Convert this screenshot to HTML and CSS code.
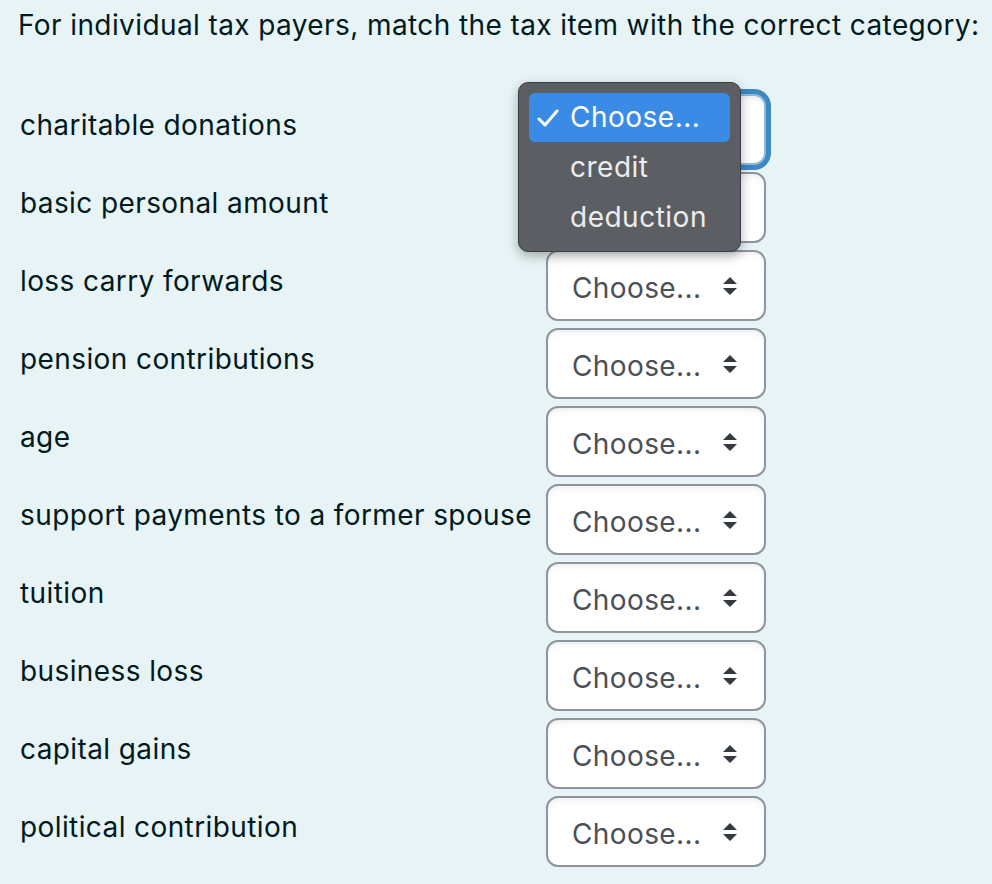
FILE: index.html
```html
<!DOCTYPE html>
<html lang="en">
<head>
  <meta charset="UTF-8">
  <meta name="viewport" content="width=device-width, initial-scale=1.0">
  <title>Match question</title>
  <link rel="stylesheet" href="styles.css">
</head>
<body>
  <div class="formulation">
    <div class="qtext">For individual tax payers, match the tax item with the correct category:</div>
    <div class="answer">
      <div class="text">charitable donations</div>
      <div class="control">
        <div class="select focused"></div>
        <div class="menu">
          <div class="option active"><svg class="check" viewBox="0 0 22 20"><path d="M2 11L8 17L20 3"/></svg>Choose...</div>
          <div class="option">credit</div>
          <div class="option">deduction</div>
        </div>
      </div>

      <div class="text">basic personal amount</div>
      <div class="control"><div class="select"></div></div>

      <div class="text">loss carry forwards</div>
      <div class="control"><div class="select"><span>Choose...</span><svg class="arrows" viewBox="0 0 14 18"><path d="M7 0L14 7H0Z M0 11H14L7 18Z"/></svg></div></div>

      <div class="text">pension contributions</div>
      <div class="control"><div class="select"><span>Choose...</span><svg class="arrows" viewBox="0 0 14 18"><path d="M7 0L14 7H0Z M0 11H14L7 18Z"/></svg></div></div>

      <div class="text">age</div>
      <div class="control"><div class="select"><span>Choose...</span><svg class="arrows" viewBox="0 0 14 18"><path d="M7 0L14 7H0Z M0 11H14L7 18Z"/></svg></div></div>

      <div class="text">support payments to a former spouse</div>
      <div class="control"><div class="select"><span>Choose...</span><svg class="arrows" viewBox="0 0 14 18"><path d="M7 0L14 7H0Z M0 11H14L7 18Z"/></svg></div></div>

      <div class="text">tuition</div>
      <div class="control"><div class="select"><span>Choose...</span><svg class="arrows" viewBox="0 0 14 18"><path d="M7 0L14 7H0Z M0 11H14L7 18Z"/></svg></div></div>

      <div class="text">business loss</div>
      <div class="control"><div class="select"><span>Choose...</span><svg class="arrows" viewBox="0 0 14 18"><path d="M7 0L14 7H0Z M0 11H14L7 18Z"/></svg></div></div>

      <div class="text">capital gains</div>
      <div class="control"><div class="select"><span>Choose...</span><svg class="arrows" viewBox="0 0 14 18"><path d="M7 0L14 7H0Z M0 11H14L7 18Z"/></svg></div></div>

      <div class="text">political contribution</div>
      <div class="control"><div class="select"><span>Choose...</span><svg class="arrows" viewBox="0 0 14 18"><path d="M7 0L14 7H0Z M0 11H14L7 18Z"/></svg></div></div>
    </div>
  </div>
</body>
</html>
```
FILE: styles.css
```css
body {
  margin: 0;
  background: #e7f3f5;
  font-family: 'Inter', 'Roboto', sans-serif;
  color: #001a1e;
  height: 884px;
  overflow: hidden;
}
.formulation {
  padding: 8px 0 0 18px;
}
.qtext {
  font-size: 28px;
  line-height: 34px;
  letter-spacing: 0.4px;
  white-space: nowrap;
}
.answer {
  display: grid;
  grid-template-columns: 514px 220px;
  column-gap: 14px;
  row-gap: 7px;
  margin-top: 52px;
}
.text {
  font-size: 28px;
  line-height: 30px;
  letter-spacing: 0.4px;
  padding: 16px 0 0 2px;
  white-space: nowrap;
}
.control {
  position: relative;
}
.select {
  box-sizing: border-box;
  height: 71px;
  border: 2px solid #8f959e;
  border-radius: 12px;
  background: #fff;
  box-shadow: inset 0 6px 8px -6px rgba(0, 0, 0, 0.12);
  display: flex;
  align-items: center;
  justify-content: space-between;
  padding: 4px 27px 0 24px;
  font-size: 28px;
  letter-spacing: 0.4px;
  color: #495057;
}
.select.focused {
  box-shadow: 0 0 0 5px #3b88c3, inset 0 6px 8px -6px rgba(0, 0, 0, 0.12);
  border-color: #8fb9da;
}
.arrows {
  width: 14px;
  height: 18px;
  fill: #343a40;
  margin-top: -4px;
}
.menu {
  position: absolute;
  left: -28px;
  top: -12px;
  width: 223px;
  box-sizing: border-box;
  height: 170px;
  padding: 10px 10px;
  background: #5b5f64;
  border: 1px solid #3c3f43;
  border-radius: 10px;
  box-shadow: 0 4px 12px rgba(0, 0, 0, 0.3);
  z-index: 2;
}
.option {
  height: 49px;
  line-height: 49px;
  padding-left: 41px;
  margin-bottom: 1px;
  font-size: 28px;
  letter-spacing: 0.5px;
  color: #ececec;
  border-radius: 6px;
  position: relative;
}
.option.active {
  background: #3a8be6;
  color: #fff;
}
.check {
  position: absolute;
  left: 8px;
  top: 15px;
  width: 22px;
  height: 20px;
  fill: none;
  stroke: #fff;
  stroke-width: 3;
  stroke-linecap: round;
  stroke-linejoin: round;
}
```
